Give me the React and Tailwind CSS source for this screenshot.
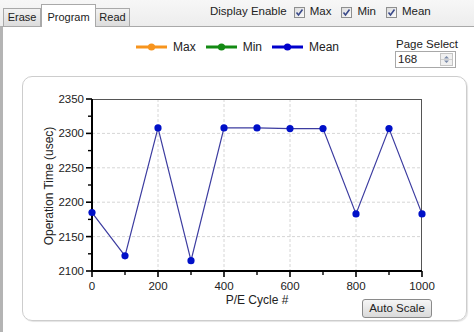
import React from "react";

const data = [
  [0, 2185], [100, 2122], [200, 2308], [300, 2115], [400, 2308], [500, 2308],
  [600, 2307], [700, 2307], [800, 2183], [900, 2307], [1000, 2183],
];

const X0 = 69, X1 = 399, Y0 = 22, Y1 = 194;
const xm = (c) => X0 + (c / 1000) * (X1 - X0);
const ym = (v) => Y1 - ((v - 2100) / 250) * (Y1 - Y0);

function Check() {
  return (
    <span className="inline-flex h-[11px] w-[11px] items-center justify-center border border-[#8e8f8f] bg-gradient-to-br from-[#dcdcdc] to-[#fbfbfb]">
      <svg width="9" height="9" viewBox="0 0 9 9">
        <path d="M1.5 4.5 L3.5 7 L7.5 1.5" stroke="#3a4a8a" strokeWidth="1.6" fill="none" />
      </svg>
    </span>
  );
}

function LegendItem({ color, label }) {
  return (
    <div className="flex items-center gap-[6px]">
      <svg width="31" height="8" viewBox="0 0 31 8">
        <line x1="0" y1="4" x2="31" y2="4" stroke={color} strokeWidth="3" />
        <circle cx="15.5" cy="4" r="3.6" fill={color} />
      </svg>
      <span className="text-[12px] text-[#222]">{label}</span>
    </div>
  );
}

function Chart() {
  const yTicks = [2100, 2150, 2200, 2250, 2300, 2350];
  const yMinor = [2125, 2175, 2225, 2275, 2325];
  const xTicks = [0, 200, 400, 600, 800, 1000];
  const xMinor = [100, 300, 500, 700, 900];
  const pts = data.map(([c, v]) => `${xm(c)},${ym(v)}`).join(" ");
  return (
    <svg width="445" height="222" className="overflow-visible block" style={{ fontFamily: "'Liberation Sans', Arial, sans-serif" }}>
      {[2150, 2200, 2250, 2300].map((v) => (
        <line key={v} x1={X0} x2={X1} y1={ym(v)} y2={ym(v)} stroke="#d6d6d6" strokeDasharray="3 2" strokeWidth="1" />
      ))}
      {[200, 400, 600, 800].map((c) => (
        <line key={c} x1={xm(c)} x2={xm(c)} y1={Y0} y2={Y1} stroke="#d6d6d6" strokeDasharray="3 2" strokeWidth="1" />
      ))}
      <line x1={X0} x2={X1} y1={Y0 + 0.5} y2={Y0 + 0.5} stroke="#555" strokeWidth="1" />
      <line x1={X1 - 0.5} x2={X1 - 0.5} y1={Y0} y2={Y1} stroke="#555" strokeWidth="1" />
      <line x1={X0} x2={X0} y1={Y0} y2={Y1 + 1} stroke="#000" strokeWidth="2" />
      <line x1={X0 - 1} x2={X1} y1={Y1} y2={Y1} stroke="#000" strokeWidth="2" />
      {yTicks.map((v) => (
        <g key={v}>
          <line x1={X0 - 6} x2={X0} y1={ym(v)} y2={ym(v)} stroke="#000" strokeWidth="1.6" />
          <text x={X0 - 8} y={ym(v) + 4} textAnchor="end" fontSize="11.5" fill="#222">{v}</text>
        </g>
      ))}
      {yMinor.map((v) => (
        <line key={v} x1={X0 - 4} x2={X0} y1={ym(v)} y2={ym(v)} stroke="#000" strokeWidth="1.4" />
      ))}
      {xTicks.map((c) => (
        <g key={c}>
          <line x1={xm(c)} x2={xm(c)} y1={Y1} y2={Y1 + 6} stroke="#000" strokeWidth="1.6" />
          <text x={xm(c)} y={Y1 + 19} textAnchor="middle" fontSize="11.5" fill="#222">{c}</text>
        </g>
      ))}
      {xMinor.map((c) => (
        <line key={c} x1={xm(c)} x2={xm(c)} y1={Y1} y2={Y1 + 4} stroke="#000" strokeWidth="1.4" />
      ))}
      <polyline points={pts} fill="none" stroke="#3c3ca0" strokeWidth="1.2" />
      {data.map(([c, v]) => (
        <circle key={c} cx={xm(c)} cy={ym(v)} r="3.6" fill="#0010c8" />
      ))}
      <text x="234" y="227" textAnchor="middle" fontSize="12" fill="#222">P/E Cycle #</text>
      <text x="0" y="0" transform="translate(30 109) rotate(-90)" textAnchor="middle" fontSize="12" fill="#222">Operation Time (usec)</text>
    </svg>
  );
}

export default function App() {
  return (
    <div className="relative h-[332px] w-[474px] overflow-hidden bg-white text-[#222]" style={{ fontFamily: "'Liberation Sans', Arial, sans-serif" }}>
      <div className="flex h-[26px] items-end bg-gradient-to-b from-[#f7f7f7] to-[#ededed] pl-[3px]">
        <div className="flex h-[18px] w-[38px] items-center justify-center border border-b-0 border-[#a9a9a9] bg-gradient-to-b from-[#f2f2f2] to-[#dcdcdc] text-[11px]">Erase</div>
        <div className="relative z-10 -mb-px flex h-[23px] w-[55px] items-start justify-center border border-b-0 border-[#a9a9a9] bg-white pt-[4px] text-[11px]">Program</div>
        <div className="flex h-[18px] w-[34px] items-center justify-center border border-b-0 border-l-0 border-[#a9a9a9] bg-gradient-to-b from-[#f2f2f2] to-[#dcdcdc] text-[11px]">Read</div>
        <div className="ml-[80px] flex h-[26px] items-center pb-[2px] text-[11.5px]">
          <span className="mr-[7px]">Display Enable</span>
          <Check />
          <span className="ml-[5px] mr-[10px]">Max</span>
          <Check />
          <span className="ml-[5px] mr-[10px]">Min</span>
          <Check />
          <span className="ml-[5px]">Mean</span>
        </div>
      </div>
      <div className="flex h-[306px] flex-col border-l-[3px] border-t border-[#b4b4b4] border-t-[#a9a9a9] bg-white">
        <div className="flex h-[49px]">
          <div className="ml-[133px] mt-[14px] flex h-[12px] items-center gap-[10px]">
            <LegendItem color="#f7941d" label="Max" />
            <LegendItem color="#138a13" label="Min" />
            <LegendItem color="#0000cc" label="Mean" />
          </div>
          <div className="ml-[56px] mt-[10px] flex flex-col">
            <span className="pl-[1px] text-[11.5px] leading-[14px]">Page Select</span>
            <div className="flex h-[17px] w-[61px] items-center justify-between border border-[#a8a8a8] bg-white pl-[2px] pr-[2px]">
              <span className="text-[11.5px]">168</span>
              <div className="flex h-[13px] w-[13px] flex-col border border-[#c4c4c4] bg-[#f0f0f0]">
                <svg width="11" height="11" viewBox="0 0 11 11">
                  <path d="M3 4.5 L5.5 2 L8 4.5Z" fill="#7a8aa8" />
                  <path d="M3 6.5 L5.5 9 L8 6.5Z" fill="#7a8aa8" />
                  <line x1="0" x2="11" y1="5.5" y2="5.5" stroke="#d0d0d0" />
                </svg>
              </div>
            </div>
          </div>
        </div>
        <div className="ml-[19px] flex h-[245px] w-[445px] flex-col rounded-[10px] border border-[#cdcdcd] shadow-[1px_1px_1px_#e4e4e4]">
          <Chart />
          <div className="flex justify-end pr-[34px]">
            <button className="h-[19px] w-[70px] rounded-[3px] border border-[#8a8a8a] bg-gradient-to-b from-[#f6f6f6] to-[#dadada] text-[11.5px] leading-none text-[#222]">Auto Scale</button>
          </div>
        </div>
      </div>
    </div>
  );
}
